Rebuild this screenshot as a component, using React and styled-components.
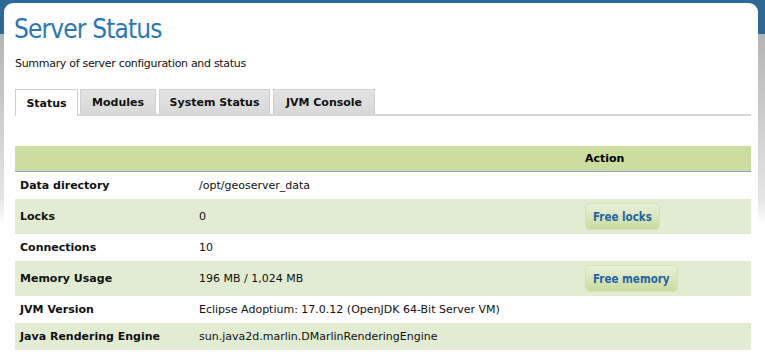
import React, { useState } from "react";
import styled, { createGlobalStyle } from "styled-components";

const GlobalStyle = createGlobalStyle`
  html, body {
    margin: 0;
    padding: 0;
  }
  body {
    font-family: "DejaVu Sans", Verdana, sans-serif;
    background: linear-gradient(
      to bottom,
      #2e6898 0,
      #2e6898 34px,
      #b4b4b4 34px,
      #e6e6e6 200px,
      #ffffff 225px
    );
    min-height: 355px;
  }
`;

const Page = styled.div`
  padding: 3px 7px 0 4px;
`;

const Panel = styled.div`
  background: #fff;
  border-radius: 9px 9px 0 0;
  padding: 10px 7px 8px 11px;
  min-height: 340px;
  box-sizing: border-box;
`;

const Title = styled.h1`
  margin: 0 0 0 -1px;
  font-family: "DejaVu Sans Condensed", "DejaVu Sans", sans-serif;
  font-size: 26px;
  font-weight: normal;
  color: #2b77b5;
  line-height: 32px;
  letter-spacing: -0.85px;
`;

const Subtitle = styled.p`
  margin: 12px 0 0;
  font-size: 11px;
  letter-spacing: -0.3px;
  color: #111;
`;

const TabBar = styled.div`
  display: flex;
  gap: 3px;
  margin-top: 19px;
  border-bottom: 2px solid #d6d6d6;
  height: 25px;
`;

const Tab = styled.button`
  font-family: inherit;
  font-size: 11px;
  font-weight: bold;
  color: #111;
  width: ${(p) => p.$w}px;
  padding: 0;
  height: ${(p) => (p.$active ? 27 : 25)}px;
  border: 1px solid #cfcfcf;
  border-bottom: none;
  background: ${(p) => (p.$active ? "#fff" : "linear-gradient(#e4e4e4, #d8d8d8)")};
  cursor: pointer;
  ${(p) => p.$active && "margin-right: -1px;"}
`;

const Table = styled.table`
  width: 100%;
  margin-top: 30px;
  border-collapse: collapse;
  font-size: 11px;
`;

const HeadCell = styled.th`
  background: #cbdea0;
  text-align: left;
  font-weight: bold;
  height: 25px;
  padding: 0 5px;
  border-bottom: 1px solid #8fa7c4;
`;

const Row = styled.tr`
  background: ${(p) => (p.$odd ? "#e2ecd2" : "#fff")};
`;

const Label = styled.td`
  font-weight: bold;
  padding: 0 5px;
  height: ${(p) => (p.$tall ? 35 : 27)}px;
  width: 169px;
  color: #111;
`;

const Value = styled.td`
  padding: 0 5px;
  color: #111;
`;

const ActionCell = styled.td`
  padding: 0 5px;
  width: 161px;
`;

const ActionButton = styled.button`
  font-family: "DejaVu Sans Condensed", "DejaVu Sans", sans-serif;
  font-size: 11.5px;
  font-weight: bold;
  color: #2563a6;
  height: 27px;
  padding: 0 7px;
  border: 1px solid #d3e2b4;
  border-radius: 5px;
  background: linear-gradient(#e9f1d9, #c9dc9e);
  cursor: pointer;
`;

const tabs = [
  { name: "Status", w: 63 },
  { name: "Modules", w: 76 },
  { name: "System Status", w: 111 },
  { name: "JVM Console", w: 102 },
];

const rows = [
  { label: "Data directory", value: "/opt/geoserver_data" },
  { label: "Locks", value: "0", action: "Free locks" },
  { label: "Connections", value: "10" },
  { label: "Memory Usage", value: "196 MB / 1,024 MB", action: "Free memory" },
  { label: "JVM Version", value: "Eclipse Adoptium: 17.0.12 (OpenJDK 64-Bit Server VM)" },
  { label: "Java Rendering Engine", value: "sun.java2d.marlin.DMarlinRenderingEngine" },
];

export default function App() {
  const [active, setActive] = useState("Status");

  return (
    <>
      <GlobalStyle />
      <Page>
        <Panel>
          <Title>Server Status</Title>
          <Subtitle>Summary of server configuration and status</Subtitle>
          <TabBar>
            {tabs.map((t) => (
              <Tab
                key={t.name}
                $w={t.w}
                $active={active === t.name}
                onClick={() => setActive(t.name)}
              >
                {t.name}
              </Tab>
            ))}
          </TabBar>
          <Table>
            <thead>
              <tr>
                <HeadCell />
                <HeadCell />
                <HeadCell>Action</HeadCell>
              </tr>
            </thead>
            <tbody>
              {rows.map((r, i) => (
                <Row key={r.label} $odd={i % 2 === 1}>
                  <Label $tall={!!r.action}>{r.label}</Label>
                  <Value>{r.value}</Value>
                  <ActionCell>
                    {r.action && <ActionButton>{r.action}</ActionButton>}
                  </ActionCell>
                </Row>
              ))}
            </tbody>
          </Table>
        </Panel>
      </Page>
    </>
  );
}
